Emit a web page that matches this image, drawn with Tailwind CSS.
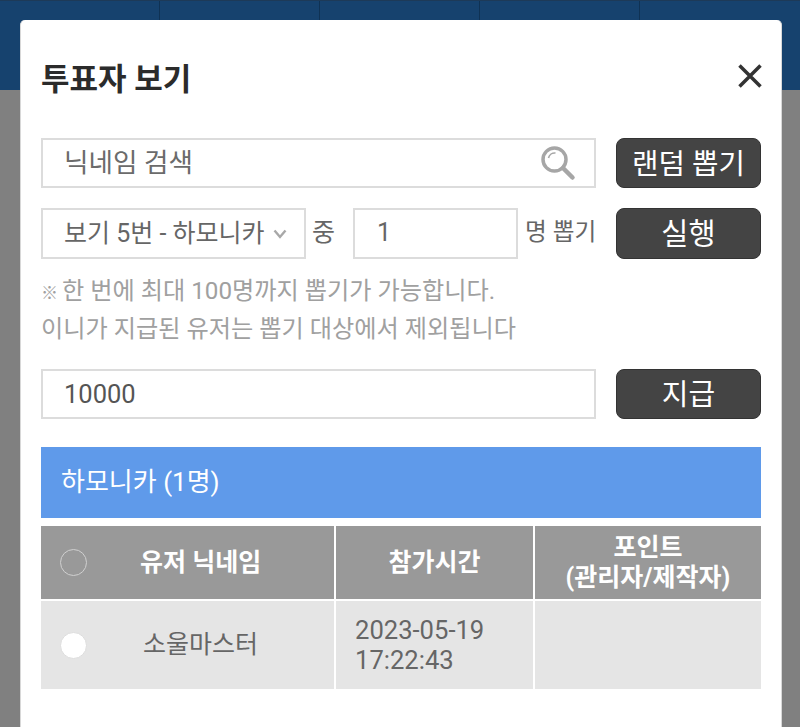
<!DOCTYPE html>
<html lang="ko">
<head>
<meta charset="UTF-8">
<meta name="viewport" content="width=device-width, initial-scale=1.0">
<title>투표자 보기</title>
<script src="https://cdn.jsdelivr.net/npm/@tailwindcss/browser@4"></script>
</head>
<body class="relative h-[727px] overflow-hidden bg-[#808080] font-['Roboto','Noto_Sans_CJK_KR',sans-serif]">

<!-- page behind the modal -->
<div class="h-[90px] bg-[#16426e] border-t border-[#1d3a58]">
  <div class="grid grid-cols-5 h-[19px]">
    <div class="border-r border-[#0f3254]"></div>
    <div class="border-r border-[#0f3254]"></div>
    <div class="border-r border-[#0f3254]"></div>
    <div class="border-r border-[#0f3254]"></div>
    <div></div>
  </div>
</div>

<div class="absolute left-[20px] top-[20px] w-[762px] h-[730px] bg-white rounded-[5px] border-l border-r border-[#d8d8d8] px-[20px] text-[#666]">
  <div class="flex items-center justify-between h-[118px] pb-[2px]">
    <h1 class="pt-[4px] text-[31px] font-bold text-[#2b2b2b]">투표자 보기</h1>
    <svg class="w-[26px] h-[26px] mr-[-2px] mb-[4px]" viewBox="0 0 26 26" fill="none" stroke="#333" stroke-width="3.5"><path d="M2.5 2.5l21 21M23.5 2.5l-21 21"/></svg>
  </div>

  <div class="flex justify-between">
    <div class="w-[555px] h-[50px] border-2 border-[#dcdcdc] flex items-center justify-between pl-[21px] pr-[18px]">
      <span class="text-[26.600px] leading-none text-[#6b6b6b]">닉네임 검색</span>
      <svg class="w-[36px] h-[36px]" viewBox="0 0 36 36" fill="none" stroke="#a6a6a6"><circle cx="14.5" cy="14.5" r="11.5" stroke-width="3.5"/><path d="M8.5 13a6.500 6.500 0 0 1 7-5" stroke-width="1.6"/><path d="M23 23l9.500 9.500" stroke-width="4.5" stroke-linecap="round"/></svg>
    </div>
    <button class="w-[145px] h-[50px] pt-[2px] bg-[#444] border border-[#333] rounded-[8px] text-white text-[28.800px] leading-none whitespace-nowrap">랜덤 뽑기</button>
  </div>

  <div class="flex justify-between items-center mt-[19px]">
    <div class="flex items-center text-[24px]">
      <div class="w-[265px] h-[51px] mt-[1px] border-2 border-[#dcdcdc] flex items-center pl-[21px]">
        <span class="whitespace-nowrap text-[25px]">보기 5번 - 하모니카</span>
        <svg class="ml-[8px] w-[14px] h-[10px]" viewBox="0 0 14 10" fill="none" stroke="#a8a8a8" stroke-width="2.4"><path d="M1.500 1.500L7 8l5.500-6.500"/></svg>
      </div>
      <span class="ml-[6px] w-[41px] text-[25px]">중</span>
      <div class="w-[165px] h-[51px] border-2 border-[#dcdcdc] flex items-center pl-[22px] text-[25px]">1</div>
      <span class="ml-[7px] whitespace-nowrap text-[23.700px]">명 뽑기</span>
    </div>
    <button class="w-[145px] h-[51px] pt-[3px] bg-[#444] border border-[#333] rounded-[8px] text-white text-[29.500px] leading-none">실행</button>
  </div>

  <div class="mt-[13px] text-[24.200px] leading-[38px] text-[#a0a0a0]">
    <p><span class="inline-block w-[21px] text-[17px] leading-none">※</span>한 번에 최대 100명까지 뽑기가 가능합니다.</p>
    <p>이니가 지급된 유저는 뽑기 대상에서 제외됩니다</p>
  </div>

  <div class="flex justify-between mt-[21px]">
    <div class="w-[555px] h-[50px] border-2 border-[#dcdcdc] flex items-center pl-[21px] text-[25.500px] text-[#555]">10000</div>
    <button class="w-[145px] h-[50px] pt-[3px] bg-[#444] border border-[#333] rounded-[8px] text-white text-[29px] leading-none">지급</button>
  </div>

  <div class="mt-[28px] h-[71px] bg-[#5f9aea] flex items-center pl-[20px] text-white text-[26px]">하모니카 (1명)</div>

  <div class="mt-[8px] grid grid-cols-[293px_197px_226px] gap-[2px]">
    <div class="h-[73px] bg-[#999] flex items-center pl-[19px]">
      <span class="w-[27px] h-[27px] rounded-full border border-[#d0d0d0]"></span>
      <span class="ml-[53px] text-white text-[25px] font-bold">유저 닉네임</span>
    </div>
    <div class="bg-[#999] flex items-center justify-center text-white text-[25px] font-bold">참가시간</div>
    <div class="bg-[#999] flex items-center justify-center text-center text-white text-[25px] leading-[30px] font-bold">포인트<br>(관리자/제작자)</div>

    <div class="h-[88px] bg-[#e5e5e5] flex items-center pl-[19px]">
      <span class="w-[27px] h-[27px] rounded-full bg-white border border-[#ddd]"></span>
      <span class="ml-[56px] text-[25px]">소울마스터</span>
    </div>
    <div class="bg-[#e5e5e5] flex items-center pl-[19px] text-[25.600px] leading-[30px]">2023-05-19<br>17:22:43</div>
    <div class="bg-[#e5e5e5]"></div>
  </div>
</div>

</body>
</html>
